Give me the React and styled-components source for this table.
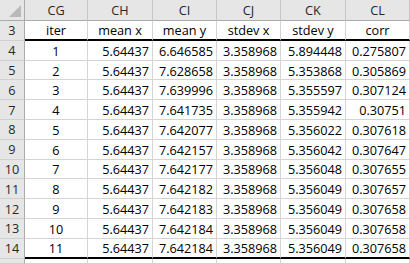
import React from "react"
import styled, { createGlobalStyle } from "styled-components"

const GlobalStyle = createGlobalStyle`
  body {
    margin: 0;
    background: #ffffff;
    font-family: "Open Sans", "Liberation Sans", Arial, sans-serif;
  }
`

const Sheet = styled.div`
  display: grid;
  grid-template-columns: 25px 63px 65px 64px 64px 65px 64px;
  grid-template-rows: 21px repeat(12, 19.8px) 1fr;
  width: 410px;
  height: 264px;
  overflow: hidden;
  font-size: 12.7px;
  color: #000;
`

const Corner = styled.div`
  position: relative;
  background: #e6e6e6;
  border-right: 1px solid #ababab;
  border-bottom: 1px solid #ababab;
  box-sizing: border-box;

  &::after {
    content: "";
    position: absolute;
    right: 3px;
    bottom: 3px;
    width: 12px;
    height: 12px;
    background: #b9b9b9;
    clip-path: polygon(100% 0, 100% 100%, 0 100%);
  }
`

const ColHead = styled.div`
  display: flex;
  align-items: center;
  justify-content: center;
  background: #e6e6e6;
  border-right: 1px solid #c6c6c6;
  border-bottom: 1px solid #ababab;
  box-sizing: border-box;
  color: #262626;
`

const RowHead = styled.div`
  display: flex;
  align-items: center;
  justify-content: center;
  background: #e6e6e6;
  border-right: 1px solid #ababab;
  border-bottom: 1px solid #d0d0d0;
  box-sizing: border-box;
  color: #262626;
`

const Cell = styled.div`
  display: flex;
  align-items: center;
  justify-content: ${(p) => (p.$align === "right" ? "flex-end" : "center")};
  padding: 1px 3px 0;
  border-right: 1px solid #d4d4d4;
  border-bottom: ${(p) => (p.$heavy ? "2px solid #000" : "1px solid #d4d4d4")};
  box-sizing: border-box;
  white-space: nowrap;
`

const cols = ["CG", "CH", "CI", "CJ", "CK", "CL"]
const labels = ["iter", "mean x", "mean y", "stdev x", "stdev y", "corr"]

const rows = [
  ["1", "5.64437", "6.646585", "3.358968", "5.894448", "0.275807"],
  ["2", "5.64437", "7.628658", "3.358968", "5.353868", "0.305869"],
  ["3", "5.64437", "7.639996", "3.358968", "5.355597", "0.307124"],
  ["4", "5.64437", "7.641735", "3.358968", "5.355942", "0.30751"],
  ["5", "5.64437", "7.642077", "3.358968", "5.356022", "0.307618"],
  ["6", "5.64437", "7.642157", "3.358968", "5.356042", "0.307647"],
  ["7", "5.64437", "7.642177", "3.358968", "5.356048", "0.307655"],
  ["8", "5.64437", "7.642182", "3.358968", "5.356049", "0.307657"],
  ["9", "5.64437", "7.642183", "3.358968", "5.356049", "0.307658"],
  ["10", "5.64437", "7.642184", "3.358968", "5.356049", "0.307658"],
  ["11", "5.64437", "7.642184", "3.358968", "5.356049", "0.307658"],
]

export default function App() {
  return (
    <>
      <GlobalStyle />
      <Sheet>
        <Corner />
        {cols.map((c) => (
          <ColHead key={c}>{c}</ColHead>
        ))}

        <RowHead>3</RowHead>
        {labels.map((l) => (
          <Cell key={l} $heavy>{l}</Cell>
        ))}

        {rows.map((r, i) => (
          <React.Fragment key={i}>
            <RowHead>{i + 4}</RowHead>
            {r.map((v, j) => (
              <Cell
                key={j}
                $align={j === 0 ? "center" : "right"}
                $heavy={i === rows.length - 1}
              >
                {v}
              </Cell>
            ))}
          </React.Fragment>
        ))}

        <RowHead />
        {cols.map((c) => (
          <Cell key={c} />
        ))}
      </Sheet>
    </>
  )
}
